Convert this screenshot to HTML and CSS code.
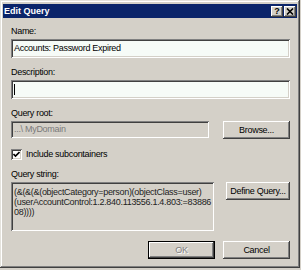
FILE: index.html
```html
<!DOCTYPE html>
<html lang="en">
<head>
    <meta charset="UTF-8">
    <meta name="viewport" content="width=device-width, initial-scale=1.0">
    <title>Edit Query</title>
    <link rel="stylesheet" href="styles.css">
</head>
<body>
    <div class="window">
        <div class="titlebar">
            <span class="title">Edit Query</span>
            <div class="cap-buttons">
                <span class="cap-btn help">?</span>
                <span class="cap-btn">
                    <svg width="8" height="7" viewBox="0 0 8 7"><path d="M1 0.5 L7 6.5 M7 0.5 L1 6.5" stroke="#000" stroke-width="1.6" fill="none"/></svg>
                </span>
            </div>
        </div>
        <div class="content">
            <label class="lbl first" for="name">Name:</label>
            <div class="field" id="name">Accounts: Password Expired</div>

            <label class="lbl" for="description">Description:</label>
            <div class="field" id="description"><span class="caret"></span></div>

            <label class="lbl">Query root:</label>
            <div class="row">
                <div class="field readonly root">...\ MyDomain</div>
                <button class="btn browse">Browse...</button>
            </div>

            <div class="check-row">
                <span class="checkbox">
                    <svg width="7" height="7" viewBox="0 0 7 7"><polyline points="0.5,3 2.5,5 6.5,1" stroke="#000" stroke-width="1.6" fill="none"/></svg>
                </span>
                Include subcontainers
            </div>

            <label class="lbl">Query string:</label>
            <div class="row">
                <div class="textarea">(&amp;(&amp;(&amp;(objectCategory=person)(objectClass=user)<br>(userAccountControl:1.2.840.113556.1.4.803:=83886<br>08))))</div>
                <button class="btn define">Define Query...</button>
            </div>

            <div class="actions">
                <button class="btn default" disabled>OK</button>
                <button class="btn">Cancel</button>
            </div>
        </div>
    </div>
</body>
</html>
```

FILE: styles.css
```css
body {
    margin: 0;
    background: #d4d0c8;
    font-family: "Liberation Sans", Arial, sans-serif;
    font-size: 9px;
    letter-spacing: -0.3px;
    color: #000;
}
.window {
    width: 300px;
    height: 268px;
    box-sizing: border-box;
    padding: 3px;
    background: #d4d0c8;
    box-shadow: inset -1px -1px #404040, inset 1px 1px #e4e2dc, inset -2px -2px #808080, inset 2px 2px #fff;
}
.titlebar {
    margin-top: 1px;
    height: 14px;
    background: #0a246a;
    display: flex;
    align-items: center;
    justify-content: space-between;
    padding: 0 1px 0 1px;
}
.title {
    color: #fff;
    font-weight: bold;
    font-size: 9px;
    letter-spacing: 0;
}
.cap-buttons {
    display: flex;
    gap: 1px;
}
.cap-btn {
    width: 12px;
    height: 11px;
    background: #d4d0c8;
    box-shadow: inset -1px -1px #404040, inset 1px 1px #fff, inset -2px -2px #808080;
    display: flex;
    align-items: center;
    justify-content: center;
    font-weight: bold;
    font-size: 9px;
    letter-spacing: 0;
    line-height: 11px;
}
.content {
    padding: 0 7px 0 8px;
}
.lbl {
    display: block;
    line-height: 12px;
    margin-top: 8px;
    margin-bottom: 2px;
}
.lbl.first {
    margin-top: 7px;
}
.field {
    height: 19px;
    box-sizing: border-box;
    padding: 0 3px;
    background: #f6fbf7;
    line-height: 19px;
    box-shadow: inset 1px 1px #808080, inset -1px -1px #fff, inset 2px 2px #404040, inset -2px -2px #d4d0c8;
    position: relative;
}
.caret {
    position: absolute;
    left: 3px;
    top: 4px;
    width: 1px;
    height: 11px;
    background: #000;
}
.row {
    display: flex;
    justify-content: space-between;
    align-items: flex-start;
}
.field.readonly {
    background: #d4d0c8;
    color: #7a7a7a;
}
.root {
    width: 198px;
    height: 17px;
    line-height: 17px;
}
.btn {
    height: 18px;
    padding: 0;
    border: none;
    background: #d4d0c8;
    font-family: inherit;
    font-size: 9px;
    letter-spacing: -0.3px;
    white-space: nowrap;
    color: #000;
    box-shadow: inset -1px -1px #404040, inset 1px 1px #fff, inset -2px -2px #808080;
}
.browse {
    width: 67px;
}
.define {
    width: 64px;
}
.check-row {
    display: flex;
    align-items: center;
    gap: 4px;
    margin-top: 9px;
    height: 12px;
}
.checkbox {
    width: 11px;
    height: 11px;
    box-sizing: border-box;
    background: #fff;
    box-shadow: inset 1px 1px #808080, inset -1px -1px #fff, inset 2px 2px #404040, inset -2px -2px #d4d0c8;
    display: flex;
    align-items: center;
    justify-content: center;
}
.textarea {
    width: 203px;
    height: 49px;
    box-sizing: border-box;
    padding: 5px 3px;
    line-height: 10px;
    white-space: nowrap;
    overflow: hidden;
    color: #222;
    box-shadow: inset 1px 1px #808080, inset -1px -1px #fff, inset 2px 2px #404040, inset -2px -2px #d4d0c8;
}
.actions {
    display: flex;
    justify-content: flex-end;
    gap: 8px;
    margin-top: 10px;
}
.actions .btn {
    width: 67px;
}
.btn.default {
    color: #808080;
    text-shadow: 1px 1px #fff;
    box-shadow: inset 0 0 0 1px #000, inset -2px -2px #404040, inset 2px 2px #fff, inset -3px -3px #808080;
}
```
